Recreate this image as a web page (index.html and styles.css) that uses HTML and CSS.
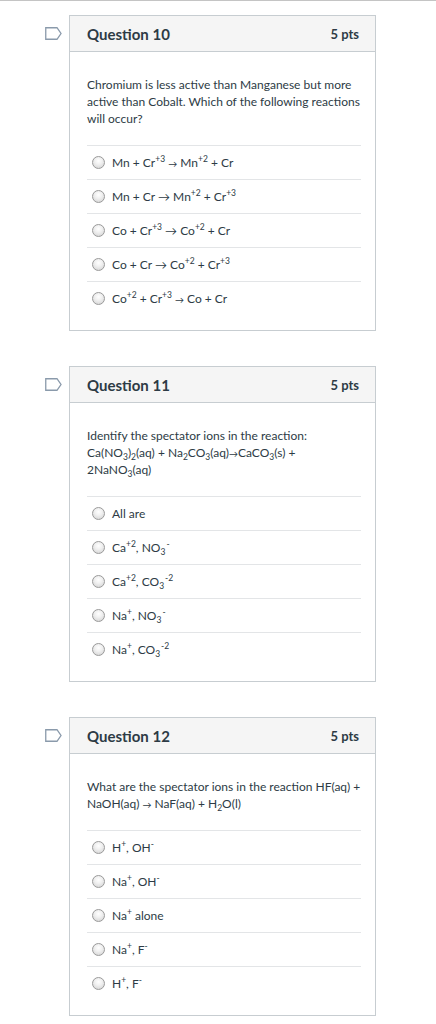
FILE: index.html
```html
<!DOCTYPE html>
<html>
<head>
<meta charset="utf-8">
<link rel="stylesheet" href="styles.css">
</head>
<body>
<div class="topline"></div>
<div class="quiz">

  <div class="qrow">
    <div class="flag"><svg width="17" height="13" viewBox="0 0 17 13"><path d="M0.75 0.75 H12 L16 6.5 L12 12.25 H0.75 Z" fill="none" stroke="#8a9aab" stroke-width="1.3" stroke-linejoin="miter"/></svg></div>
    <div class="card">
      <div class="head"><span class="title">Question 10</span><span class="pts">5 pts</span></div>
      <div class="body">
        <p class="text">Chromium is less active than Manganese but more active than Cobalt. Which of the following reactions will occur?</p>
        <div class="answers">
          <div class="ans"><span class="radio"></span><span>Mn + Cr<sup>+3</sup> <span class="sarr">→</span> Mn<sup>+2</sup> + Cr</span></div>
          <div class="ans"><span class="radio"></span><span>Mn + Cr → Mn<sup>+2</sup> + Cr<sup>+3</sup></span></div>
          <div class="ans"><span class="radio"></span><span>Co + Cr<sup>+3</sup> → Co<sup>+2</sup> + Cr</span></div>
          <div class="ans"><span class="radio"></span><span>Co + Cr → Co<sup>+2</sup> + Cr<sup>+3</sup></span></div>
          <div class="ans"><span class="radio"></span><span>Co<sup>+2</sup> + Cr<sup>+3</sup> <span class="sarr">→</span> Co + Cr</span></div>
        </div>
      </div>
    </div>
  </div>

  <div class="qrow">
    <div class="flag"><svg width="17" height="13" viewBox="0 0 17 13"><path d="M0.75 0.75 H12 L16 6.5 L12 12.25 H0.75 Z" fill="none" stroke="#8a9aab" stroke-width="1.3"/></svg></div>
    <div class="card">
      <div class="head"><span class="title">Question 11</span><span class="pts">5 pts</span></div>
      <div class="body">
        <p class="text">Identify the spectator ions in the reaction: Ca(NO<sub>3</sub>)<sub>2</sub>(aq) + Na<sub>2</sub>CO<sub>3</sub>(aq)<span class="sarr">→</span>CaCO<sub>3</sub>(s) + 2NaNO<sub>3</sub>(aq)</p>
        <div class="answers">
          <div class="ans"><span class="radio"></span><span>All are</span></div>
          <div class="ans"><span class="radio"></span><span>Ca<sup>+2</sup>, NO<sub>3</sub><sup class="after">-</sup></span></div>
          <div class="ans"><span class="radio"></span><span>Ca<sup>+2</sup>, CO<sub>3</sub><sup class="after">-2</sup></span></div>
          <div class="ans"><span class="radio"></span><span>Na<sup>+</sup>, NO<sub>3</sub><sup class="after">-</sup></span></div>
          <div class="ans"><span class="radio"></span><span>Na<sup>+</sup>, CO<sub>3</sub><sup class="after">-2</sup></span></div>
        </div>
      </div>
    </div>
  </div>

  <div class="qrow">
    <div class="flag"><svg width="17" height="13" viewBox="0 0 17 13"><path d="M0.75 0.75 H12 L16 6.5 L12 12.25 H0.75 Z" fill="none" stroke="#8a9aab" stroke-width="1.3"/></svg></div>
    <div class="card">
      <div class="head"><span class="title">Question 12</span><span class="pts">5 pts</span></div>
      <div class="body">
        <p class="text">What are the spectator ions in the reaction HF(aq) + NaOH(aq) <span class="sarr">→</span> NaF(aq) + H<sub>2</sub>O(l)</p>
        <div class="answers">
          <div class="ans"><span class="radio"></span><span>H<sup>+</sup>, OH<sup>-</sup></span></div>
          <div class="ans"><span class="radio"></span><span>Na<sup>+</sup>, OH<sup>-</sup></span></div>
          <div class="ans"><span class="radio"></span><span>Na<sup>+</sup> alone</span></div>
          <div class="ans"><span class="radio"></span><span>Na<sup>+</sup>, F<sup>-</sup></span></div>
          <div class="ans"><span class="radio"></span><span>H<sup>+</sup>, F<sup>-</sup></span></div>
        </div>
      </div>
    </div>
  </div>

</div>
</body>
</html>
```

FILE: styles.css
```css
html, body {
  margin: 0;
  padding: 0;
  background: #ffffff;
}
body {
  font-family: Lato, "Open Sans", "Liberation Sans", sans-serif;
  color: #2d3b45;
  font-size: 12px;
}
.topline {
  height: 1px;
  background: #c4c4c4;
}
.quiz {
  padding: 14px 0 0 45px;
  display: flex;
  flex-direction: column;
  gap: 35px;
}
.qrow {
  display: flex;
  align-items: flex-start;
}
.flag {
  width: 24px;
  padding-top: 12px;
  height: 13px;
}
.flag svg {
  display: block;
}
.card {
  width: 305px;
  border: 1px solid #c7cdd1;
  background: #fff;
}
.head {
  height: 35px;
  background: #f5f5f5;
  border-bottom: 1px solid #c7cdd1;
  display: flex;
  align-items: center;
  justify-content: space-between;
  padding: 0 16px 0 17px;
}
.title {
  font-weight: 700;
  font-size: 15px;
  color: #2d3b45;
}
.pts {
  font-weight: 700;
  font-size: 13px;
  color: #2d3b45;
}
.body {
  padding: 24px 14px 15px 17px;
}
.text {
  margin: 0 0 18px 0;
  line-height: 17px;
  font-size: 12px;
}
.ans {
  height: 33px;
  border-top: 1px solid #e3e5e7;
  display: flex;
  align-items: center;
  padding-left: 5px;
  font-size: 12px;
  line-height: 17px;
}
.radio {
  width: 11px;
  height: 11px;
  border-radius: 50%;
  border: 1px solid #9a9a9a;
  background: radial-gradient(circle at 50% 35%, #ffffff 0%, #f0f0f0 40%, #cfcfcf 100%);
  margin-right: 7px;
  flex: none;
}
sup, sub {
  font-size: 8.5px;
  line-height: 0;
  position: relative;
  vertical-align: baseline;
}
sup {
  top: -5px;
}
sub {
  top: 3px;
}
sub + sup.after {
  margin-left: 1px;
}
.sarr {
  font-size: 9px;
  line-height: 0;
}
```
